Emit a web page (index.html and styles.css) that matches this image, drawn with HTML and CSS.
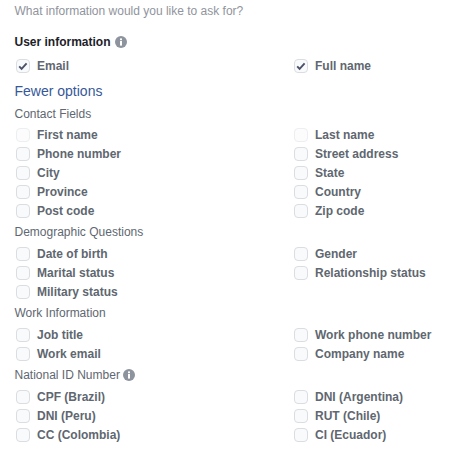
FILE: index.html
```html
<!DOCTYPE html>
<html lang="en">
<head>
<meta charset="utf-8">
<title>Form fields</title>
<link rel="stylesheet" href="styles.css">
</head>
<body>
<main class="panel">
  <p class="question">What information would you like to ask for?</p>
  <h2 class="user-title">User information <svg class="info" viewBox="0 0 12 12"><use href="#i"/></svg></h2>
  <div class="grid first">
    <label class="item"><span class="box"><svg viewBox="0 0 14 14"><path d="M3.2 7.4 5.6 9.8 10.6 4.4" fill="none" stroke="#4b5168" stroke-width="1.9"/></svg></span>Email</label>
    <label class="item"><span class="box"><svg viewBox="0 0 14 14"><path d="M3.2 7.4 5.6 9.8 10.6 4.4" fill="none" stroke="#4b5168" stroke-width="1.9"/></svg></span>Full name</label>
  </div>
  <a class="more" href="#">Fewer options</a>
  <h3 class="group contact">Contact Fields</h3>
  <div class="grid">
    <label class="item"><span class="box faint"></span>First name</label>
    <label class="item"><span class="box faint"></span>Last name</label>
    <label class="item"><span class="box"></span>Phone number</label>
    <label class="item"><span class="box"></span>Street address</label>
    <label class="item"><span class="box"></span>City</label>
    <label class="item"><span class="box"></span>State</label>
    <label class="item"><span class="box"></span>Province</label>
    <label class="item"><span class="box"></span>Country</label>
    <label class="item"><span class="box"></span>Post code</label>
    <label class="item"><span class="box"></span>Zip code</label>
  </div>
  <h3 class="group">Demographic Questions</h3>
  <div class="grid">
    <label class="item"><span class="box"></span>Date of birth</label>
    <label class="item"><span class="box"></span>Gender</label>
    <label class="item"><span class="box"></span>Marital status</label>
    <label class="item"><span class="box"></span>Relationship status</label>
    <label class="item"><span class="box"></span>Military status</label>
  </div>
  <h3 class="group">Work Information</h3>
  <div class="grid">
    <label class="item"><span class="box"></span>Job title</label>
    <label class="item"><span class="box"></span>Work phone number</label>
    <label class="item"><span class="box"></span>Work email</label>
    <label class="item"><span class="box"></span>Company name</label>
  </div>
  <h3 class="group">National ID Number <svg class="info" viewBox="0 0 12 12"><use href="#i"/></svg></h3>
  <div class="grid">
    <label class="item"><span class="box"></span>CPF (Brazil)</label>
    <label class="item"><span class="box"></span>DNI (Argentina)</label>
    <label class="item"><span class="box"></span>DNI (Peru)</label>
    <label class="item"><span class="box"></span>RUT (Chile)</label>
    <label class="item"><span class="box"></span>CC (Colombia)</label>
    <label class="item"><span class="box"></span>CI (Ecuador)</label>
  </div>
</main>
<svg class="defs" width="0" height="0"><defs><g id="i"><circle cx="6" cy="6" r="6" fill="#8d949e"/><rect x="5" y="5" width="2" height="4.6" fill="#fff"/><rect x="5" y="2.4" width="2" height="1.8" fill="#fff"/></g></defs></svg>
</body>
</html>
```
FILE: styles.css
```css
* { box-sizing: border-box; }
html, body { margin: 0; padding: 0; background: #fff; }
body { font-family: "Liberation Sans", Arial, sans-serif; color: #606770; width: 475px; height: 452px; overflow: hidden; }
.panel { padding: 4px 0 0 14.5px; }
.question { margin: 0; font-size: 12px; line-height: 15px; color: #90949c; }
.user-title { margin: 15px 0 0; font-size: 12px; line-height: 16px; font-weight: 700; color: #1d2129; display: flex; align-items: center; gap: 4px; }
.info { width: 12px; height: 12px; display: block; }
.group .info { display: inline-block; vertical-align: -2px; }
.grid { display: grid; grid-template-columns: 278px 170px; }
.first { margin-top: 6px; }
.item { display: flex; align-items: center; height: 19px; font-size: 12px; font-weight: 700; color: #606770; white-space: nowrap; padding-left: 1.5px; }
.box { width: 14px; height: 14px; margin-right: 7px; border: 1px solid #dadde1; border-radius: 4px; background: #f9fafb; flex: none; display: block; }
.box svg { display: block; width: 14px; height: 14px; margin: -1px; }
.box.faint { border-color: #eceef1; background: #fcfcfc; }
.more { display: block; margin-top: 7px; font-size: 14px; line-height: 18px; color: #365899; text-decoration: none; }
.group { margin: 5px 0 4px; font-size: 12px; line-height: 15px; font-weight: 400; color: #606770; }
.contact { margin: 7px 0 3px; }
.defs { position: absolute; }
```
